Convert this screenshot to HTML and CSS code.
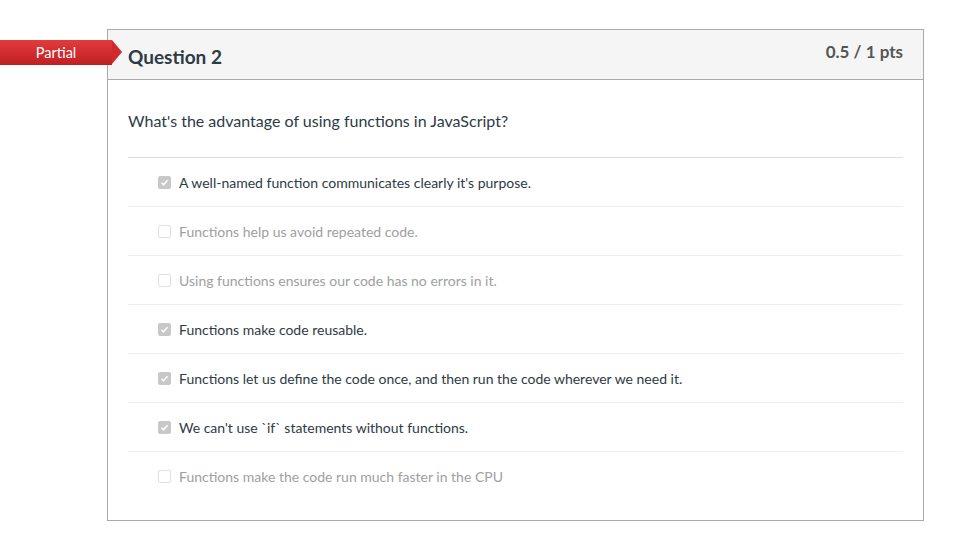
FILE: index.html
```html
<!DOCTYPE html>
<html>
<head>
<meta charset="utf-8">
<link rel="stylesheet" href="styles.css">
</head>
<body>
<div class="page">
  <div class="ribbon">Partial</div>
  <div class="card">
    <div class="card-header">
      <h2 class="title">Question 2</h2>
      <div class="pts">0.5 / 1 pts</div>
    </div>
    <div class="card-body">
      <p class="question">What's the advantage of using functions in JavaScript?</p>
      <div class="answers">
        <div class="answer selected"><span class="box checked"><svg viewBox="0 0 13 13"><path d="M3 6.8 L5.4 9.2 L10 3.8" fill="none" stroke="#fff" stroke-width="1.8"/></svg></span><span class="label">A well-named function communicates clearly it's purpose.</span></div>
        <div class="answer"><span class="box"></span><span class="label">Functions help us avoid repeated code.</span></div>
        <div class="answer"><span class="box"></span><span class="label">Using functions ensures our code has no errors in it.</span></div>
        <div class="answer selected"><span class="box checked"><svg viewBox="0 0 13 13"><path d="M3 6.8 L5.4 9.2 L10 3.8" fill="none" stroke="#fff" stroke-width="1.8"/></svg></span><span class="label">Functions make code reusable.</span></div>
        <div class="answer selected"><span class="box checked"><svg viewBox="0 0 13 13"><path d="M3 6.8 L5.4 9.2 L10 3.8" fill="none" stroke="#fff" stroke-width="1.8"/></svg></span><span class="label">Functions let us define the code once, and then run the code wherever we need it.</span></div>
        <div class="answer selected"><span class="box checked"><svg viewBox="0 0 13 13"><path d="M3 6.8 L5.4 9.2 L10 3.8" fill="none" stroke="#fff" stroke-width="1.8"/></svg></span><span class="label">We can't use `if` statements without functions.</span></div>
        <div class="answer"><span class="box"></span><span class="label">Functions make the code run much faster in the CPU</span></div>
      </div>
    </div>
  </div>
</div>
</body>
</html>
```
FILE: styles.css
```css
html, body {
  margin: 0;
  padding: 0;
  background: #fff;
  font-family: Lato, "Open Sans", "Liberation Sans", sans-serif;
  color: #2d3b45;
}
.page {
  position: relative;
  padding: 29px 30px 0 107px;
}
.ribbon {
  position: absolute;
  left: 0;
  top: 40px;
  width: 112px;
  height: 25px;
  line-height: 25px;
  background: linear-gradient(#e13b3d, #c01f22);
  color: #fff;
  font-size: 14.5px;
  text-align: center;
  z-index: 2;
}
.ribbon::after {
  content: "";
  position: absolute;
  left: 112px;
  top: 0;
  border-top: 12.5px solid transparent;
  border-bottom: 12.5px solid transparent;
  border-left: 10px solid #d02a2d;
}
.card {
  width: 815px;
  border: 1px solid #a9a9a9;
}
.card-header {
  display: flex;
  justify-content: space-between;
  align-items: flex-start;
  background: #f5f5f5;
  border-bottom: 1px solid #a9a9a9;
  height: 49px;
  padding: 0 20px;
}
.title {
  margin: 0;
  padding-top: 16px;
  font-size: 19px;
  line-height: 22px;
  font-weight: 700;
  color: #2d3b45;
}
.pts {
  padding-top: 12px;
  font-size: 17px;
  line-height: 20px;
  font-weight: 700;
  color: #555;
}
.card-body {
  padding: 31px 20px 20px;
}
.question {
  margin: 0 0 26px;
  font-size: 16px;
  line-height: 20px;
}
.answers {
  border-top: 1px solid #ddd;
}
.answer {
  display: flex;
  align-items: center;
  height: 48px;
  padding-left: 30px;
  font-size: 14px;
  color: #a0a0a0;
}
.answer + .answer {
  border-top: 1px solid #eee;
}
.answer.selected {
  color: #2d3b45;
}
.box {
  width: 11px;
  height: 11px;
  border: 1px solid #e0e0e0;
  border-radius: 2px;
  background: #fff;
  margin-right: 8px;
  display: flex;
}
.box.checked {
  background: #c8c8c8;
  border-color: #c8c8c8;
}
.box svg {
  width: 11px;
  height: 11px;
}
```
